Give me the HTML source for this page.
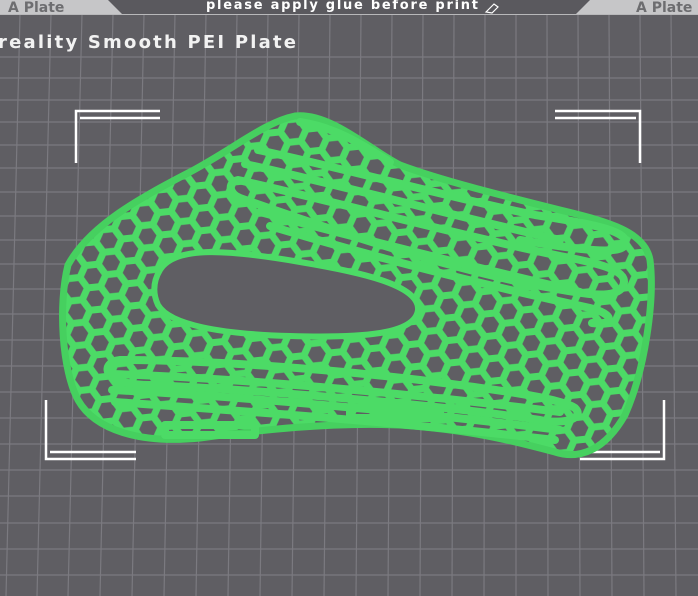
<!DOCTYPE html>
<html><head><style>
html,body{margin:0;padding:0;width:698px;height:596px;overflow:hidden;background:#5f5e63}
svg{display:block}
text{font-family:"DejaVu Sans","Liberation Sans",sans-serif;font-weight:bold}
</style></head><body>
<svg width="698" height="596" viewBox="0 0 698 596" xmlns="http://www.w3.org/2000/svg">
<defs>
<pattern id="hex" width="39" height="22.5" patternUnits="userSpaceOnUse" patternTransform="rotate(-6) translate(5 3)">
<rect width="39" height="22.5" fill="#4cdb66"/>
<g fill="#5f5e63">
<polygon id="h" points="-9,0 -4.5,-7.8 4.5,-7.8 9,0 4.5,7.8 -4.5,7.8"/>
<use href="#h" x="39" y="0"/><use href="#h" x="0" y="22.5"/><use href="#h" x="39" y="22.5"/><use href="#h" x="19.5" y="11.25"/>
</g>
</pattern>
<clipPath id="outer"><path id="op" d="M68,265 C90,225 140,198 190,172 C235,148 265,122 295,116 C330,112 370,150 400,165 C440,180 500,195 560,210 C610,222 645,232 650,260 C655,300 645,370 625,415 C605,450 580,460 555,452 C510,440 470,430 400,425 C330,422 260,430 200,438 C140,444 95,430 78,400 C62,370 58,305 68,265 Z"/></clipPath>
</defs>
<rect width="698" height="596" fill="#5f5e63"/>
<g stroke="#7b7a80" stroke-width="1.2">
<line x1="0" y1="57" x2="698" y2="57"/><line x1="0" y1="78" x2="698" y2="78"/><line x1="0" y1="100" x2="698" y2="100"/><line x1="0" y1="122" x2="698" y2="122"/><line x1="0" y1="145" x2="698" y2="145"/><line x1="0" y1="168" x2="698" y2="168"/><line x1="0" y1="192" x2="698" y2="192"/><line x1="0" y1="216" x2="698" y2="216"/><line x1="0" y1="240" x2="698" y2="240"/><line x1="0" y1="264" x2="698" y2="264"/><line x1="0" y1="289" x2="698" y2="289"/><line x1="0" y1="314" x2="698" y2="314"/><line x1="0" y1="340" x2="698" y2="340"/><line x1="0" y1="366" x2="698" y2="366"/><line x1="0" y1="392" x2="698" y2="392"/><line x1="0" y1="418" x2="698" y2="418"/><line x1="0" y1="444" x2="698" y2="444"/><line x1="0" y1="470" x2="698" y2="470"/><line x1="0" y1="496" x2="698" y2="496"/><line x1="0" y1="523" x2="698" y2="523"/><line x1="0" y1="549" x2="698" y2="549"/><line x1="0" y1="575" x2="698" y2="575"/>
<line x1="20" y1="14" x2="6" y2="596"/><line x1="51" y1="14" x2="37" y2="596"/><line x1="82" y1="14" x2="68" y2="596"/><line x1="113" y1="14" x2="100" y2="596"/><line x1="144" y1="14" x2="132" y2="596"/><line x1="175" y1="14" x2="164" y2="596"/><line x1="206" y1="14" x2="196" y2="596"/><line x1="237" y1="14" x2="228" y2="596"/><line x1="268" y1="14" x2="260" y2="596"/><line x1="299" y1="14" x2="292" y2="596"/><line x1="330" y1="14" x2="324" y2="596"/><line x1="361" y1="14" x2="356" y2="596"/><line x1="392" y1="14" x2="388" y2="596"/><line x1="423" y1="14" x2="420" y2="596"/><line x1="454" y1="14" x2="452" y2="596"/><line x1="485" y1="14" x2="484" y2="596"/><line x1="516" y1="14" x2="516" y2="596"/><line x1="547" y1="14" x2="548" y2="596"/><line x1="578" y1="14" x2="580" y2="596"/><line x1="609" y1="14" x2="612" y2="596"/><line x1="640" y1="14" x2="644" y2="596"/><line x1="671" y1="14" x2="676" y2="596"/>
</g>
<rect x="0" y="0" width="698" height="14" fill="#5a595e"/>
<polygon points="0,0 108,0 122,14 0,14" fill="#c6c6c8"/>
<polygon points="698,0 590,0 576,14 698,14" fill="#c6c6c8"/>
<line x1="0" y1="14.5" x2="698" y2="14.5" stroke="#b8b8ba" stroke-width="1"/>
<text x="8" y="12" font-size="14" fill="#6d6d70">A Plate</text>
<text x="636" y="12" font-size="14" fill="#6d6d70">A Plate</text>
<text x="206" y="9" font-size="13" fill="#ffffff" textLength="272">please apply glue before print</text>
<path d="M486,12 l8,-8 l4,3 l-6,6 z" fill="none" stroke="#fff" stroke-width="1.2"/>
<text x="-2" y="48" font-size="18" fill="#f2f2f2" textLength="298">reality Smooth PEI Plate</text>
<g stroke="#ffffff" stroke-width="2.5" fill="none">
<path d="M160,111 H76 V163"/><path d="M160,118 H80"/>
<path d="M555,111 H640 V163"/><path d="M555,118 H636"/>
<path d="M46,400 V459 H136"/><path d="M50,452 H136"/>
<path d="M664,400 V459 H580"/><path d="M660,452 H580"/>
</g>
<g clip-path="url(#outer)"><rect width="698" height="596" fill="url(#hex)"/></g>
<use href="#op" fill="none" stroke="#46d05f" stroke-width="7"/>
<path d="M160,270 C175,245 230,250 300,262 C360,272 420,285 418,310 C415,335 360,338 290,336 C220,334 170,325 158,305 C152,292 154,280 160,270 Z" fill="#5f5e63" stroke="#4cdb66" stroke-width="6"/>
<g fill="none" stroke="#4cdb66" stroke-width="8" stroke-linejoin="round" stroke-linecap="round">
<path d="M300,122 C340,128 370,150 390,162"/>
<path d="M258,150 C330,165 460,200 535,215 C600,225 630,232 625,245 C620,255 580,250 520,240"/>
<path d="M245,164 C320,180 450,215 560,240"/>
<path d="M238,180 C320,198 450,233 560,256 C615,266 630,274 622,288 C612,300 580,294 520,282 C420,260 320,226 240,198 C228,193 228,182 238,180 Z"/>
<path d="M260,212 C350,236 470,266 580,292"/>
<path d="M270,226 C350,250 460,280 590,308 C615,314 615,326 592,323"/>
<path d="M120,360 C200,360 320,368 420,380 C500,390 560,398 575,408 C585,418 565,425 540,420 C460,408 300,392 150,385 C100,385 100,362 120,360 Z"/>
<path d="M112,374 C230,378 400,392 560,412"/>
<path d="M112,390 C230,396 400,410 560,430"/>
<path d="M115,402 C230,410 400,422 555,440"/>
<path d="M165,425 H255 V435 H165 Z"/>
<path d="M350,408 H440 V418 H350 Z"/>
</g>
</svg>
</body></html>
